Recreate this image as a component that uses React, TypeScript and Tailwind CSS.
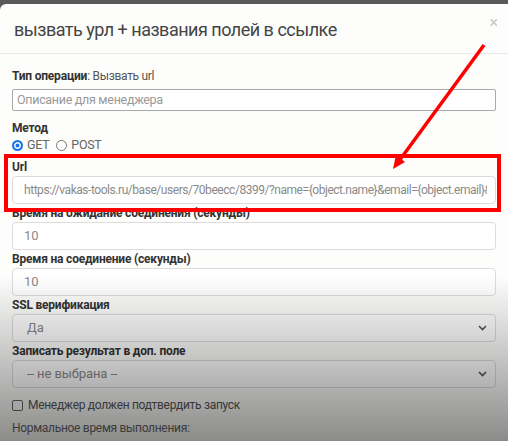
import React from 'react';

const font = { fontFamily: 'Roboto, "Liberation Sans", sans-serif' };

const url =
  'https://vakas-tools.ru/base/users/70beecc/8399/?name={object.name}&email={object.email}&';

function Label({ children }: { children: React.ReactNode }) {
  return (
    <div className="h-[18px] leading-[18px] text-[12px] tracking-[-0.2px] font-bold text-[#333]">{children}</div>
  );
}

function Field({ value, select, small }: { value: string; select?: boolean; small?: boolean }) {
  return (
    <div className="h-[28px] flex items-center bg-white border border-[#dcdcdc] rounded-[4px] pl-[11px] pr-[8px] overflow-hidden">
      <span
        className={`flex-1 whitespace-nowrap overflow-hidden text-[#8a8a8a] ${
          small ? 'text-[12px] tracking-[-0.45px]' : 'text-[13px] tracking-[-0.1px]'
        } ${select ? 'pl-[3px]' : ''}`}
      >
        {value}
      </span>
      {select && (
        <svg width="9" height="6" viewBox="0 0 9 6" className="shrink-0">
          <path d="M1 1l3.5 3.5L8 1" fill="none" stroke="#555" strokeWidth="1.6" />
        </svg>
      )}
    </div>
  );
}

export default function App() {
  return (
    <div className="relative w-[508px] h-[441px] overflow-hidden bg-[#5a5a5a]" style={font}>
      <div className="h-[4px]" />
      <div className="bg-[#fdfdfb] rounded-tl-[6px] h-[437px]">
        {/* header */}
        <div className="h-[50px] border-b border-[#e8e8e6] flex items-center justify-between pl-[14px] pr-[10px]">
          <h1 className="text-[18px] tracking-[-0.5px] text-[#444] pt-[2px]">
            вызвать урл + названия полей в ссылке
          </h1>
          <span className="text-[#c8c8c8] text-[16px] -mt-[12px]">×</span>
        </div>

        {/* body */}
        <div className="px-[12px] pt-[13px] text-[12px] tracking-[-0.3px] text-[#555]">
          <div className="h-[18px] leading-[18px]">
            <b className="text-[#333] tracking-[-0.2px]">Тип операции</b>: Вызвать url
          </div>
          <div className="mt-[4px] h-[22px] flex items-center border border-[#a9a9a9] rounded-[2px] bg-white px-[4px] text-[#999] text-[12.5px]">
            Описание для менеджера
          </div>

          <div className="mt-[8px]">
            <Label>Метод</Label>
          </div>
          <div className="h-[17px] flex items-center gap-[4px] text-[#666] text-[12.5px]">
            <span className="w-[11px] h-[11px] rounded-full bg-[#1a73e8] border-[2.5px] border-[#1a73e8] shadow-[inset_0_0_0_1.5px_#fff]" />
            <span>GET</span>
            <span className="ml-[3px] w-[11px] h-[11px] rounded-full border border-[#777] bg-white" />
            <span>POST</span>
          </div>

          <div className="mt-[4px]">
            <Label>Url</Label>
            <Field value={url} small />
          </div>
          <Label>Время на ожидание соединения (секунды)</Label>
          <Field value="10" />
          <Label>Время на соединение (секунды)</Label>
          <Field value="10" />
          <Label>SSL верификация</Label>
          <Field value="Да" select />
          <Label>Записать результат в доп. поле</Label>
          <Field value="-- не выбрана --" select />

          <div className="mt-[8px] h-[18px] flex items-center gap-[5px] text-[12px] text-[#555]">
            <span className="w-[11px] h-[11px] rounded-[2px] border border-[#666] bg-white" />
            Менеджер должен подтвердить запуск
          </div>
          <div className="mt-[5px] h-[18px] leading-[18px] text-[#666]">Нормальное время выполнения:</div>
        </div>
      </div>

      {/* red annotation */}
      <div className="absolute left-[4px] top-[154px] w-[497px] h-[58px] border-[4px] border-[#ff0000]" />
      <svg className="absolute inset-0" width="508" height="441">
        <line x1="484" y1="45" x2="399" y2="161" stroke="#ff0000" strokeWidth="3.5" />
        <polygon points="393,169 405,162 396,155" fill="#ff0000" />
      </svg>

      {/* video shade */}
      <div className="absolute left-0 right-0 bottom-0 h-[165px] pointer-events-none bg-gradient-to-b from-transparent to-black/45" />
    </div>
  );
}
